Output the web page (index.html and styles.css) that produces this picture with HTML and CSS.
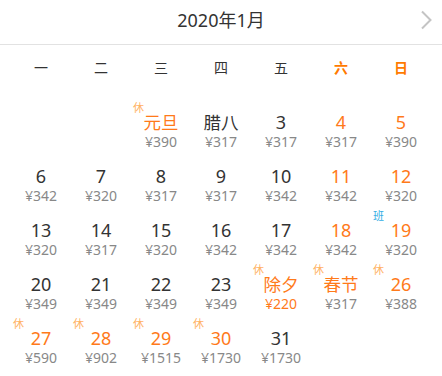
FILE: index.html
```html
<!DOCTYPE html>
<html lang="zh-CN">
<head>
<meta charset="utf-8">
<title>2020年1月</title>
<link rel="stylesheet" href="styles.css">
</head>
<body>
<div class="cal">
  <div class="cal-head">
    <span class="cal-title">2020年1月</span>
    <svg class="cal-next" width="13" height="20" viewBox="0 0 13 20"><path d="M2 1.5 L10.5 10 L2 18.5" fill="none" stroke="#c4c4c4" stroke-width="2"/></svg>
  </div>
  <div class="week">
    <span>一</span><span>二</span><span>三</span><span>四</span><span>五</span><span class="we">六</span><span class="we">日</span>
  </div>
  <div class="grid">
    <div class="cell"></div>
    <div class="cell"></div>
    <div class="cell"><i class="tag">休</i><span class="d hol">元旦</span><span class="p">¥390</span></div>
    <div class="cell"><span class="d cn">腊八</span><span class="p">¥317</span></div>
    <div class="cell"><span class="d">3</span><span class="p">¥317</span></div>
    <div class="cell"><span class="d we">4</span><span class="p">¥317</span></div>
    <div class="cell"><span class="d we">5</span><span class="p">¥390</span></div>

    <div class="cell"><span class="d">6</span><span class="p">¥342</span></div>
    <div class="cell"><span class="d">7</span><span class="p">¥320</span></div>
    <div class="cell"><span class="d">8</span><span class="p">¥317</span></div>
    <div class="cell"><span class="d">9</span><span class="p">¥317</span></div>
    <div class="cell"><span class="d">10</span><span class="p">¥342</span></div>
    <div class="cell"><span class="d we">11</span><span class="p">¥342</span></div>
    <div class="cell"><span class="d we">12</span><span class="p">¥320</span></div>

    <div class="cell"><span class="d">13</span><span class="p">¥320</span></div>
    <div class="cell"><span class="d">14</span><span class="p">¥317</span></div>
    <div class="cell"><span class="d">15</span><span class="p">¥320</span></div>
    <div class="cell"><span class="d">16</span><span class="p">¥342</span></div>
    <div class="cell"><span class="d">17</span><span class="p">¥342</span></div>
    <div class="cell"><span class="d we">18</span><span class="p">¥342</span></div>
    <div class="cell"><i class="tag work">班</i><span class="d we">19</span><span class="p">¥320</span></div>

    <div class="cell"><span class="d">20</span><span class="p">¥349</span></div>
    <div class="cell"><span class="d">21</span><span class="p">¥349</span></div>
    <div class="cell"><span class="d">22</span><span class="p">¥349</span></div>
    <div class="cell"><span class="d">23</span><span class="p">¥349</span></div>
    <div class="cell"><i class="tag">休</i><span class="d hol">除夕</span><span class="p low">¥220</span></div>
    <div class="cell"><i class="tag">休</i><span class="d hol">春节</span><span class="p">¥317</span></div>
    <div class="cell"><i class="tag">休</i><span class="d we">26</span><span class="p">¥388</span></div>

    <div class="cell"><i class="tag">休</i><span class="d we">27</span><span class="p">¥590</span></div>
    <div class="cell"><i class="tag">休</i><span class="d we">28</span><span class="p">¥902</span></div>
    <div class="cell"><i class="tag">休</i><span class="d we">29</span><span class="p">¥1515</span></div>
    <div class="cell"><i class="tag">休</i><span class="d we">30</span><span class="p">¥1730</span></div>
    <div class="cell"><span class="d">31</span><span class="p">¥1730</span></div>
    <div class="cell"></div>
    <div class="cell"></div>
  </div>
</div>
</body>
</html>
```
FILE: styles.css
```css
* { box-sizing: border-box; margin: 0; padding: 0; }
html, body { background: #fff; }
body {
  font-family: "Noto Sans", "Noto Sans CJK SC", sans-serif;
  color: #333;
  width: 442px;
  overflow: hidden;
}
.cal { width: 442px; }
.cal-head {
  position: relative;
  height: 45px;
  border-bottom: 1px solid #e2e2e2;
  display: flex;
  align-items: center;
  justify-content: center;
}
.cal-title {
  font-size: 18px;
  line-height: 24px;
  color: #333;
  margin-top: -4px;
}
.cal-next {
  position: absolute;
  right: 9px;
  top: 10px;
}
.week {
  display: grid;
  grid-template-columns: repeat(7, 60px);
  padding: 11px 11px 0;
  height: 58px;
}
.week span {
  text-align: center;
  font-size: 14px;
  line-height: 22px;
  color: #333;
  font-family: "Noto Sans CJK SC", sans-serif;
}
.week span.we { color: #ff7a00; font-weight: 700; }
.grid {
  display: grid;
  grid-template-columns: repeat(7, 60px);
  grid-auto-rows: 54px;
  padding: 0 11px;
}
.cell {
  position: relative;
  display: flex;
  flex-direction: column;
  align-items: center;
  padding-top: 8px;
}
.d {
  font-size: 18px;
  line-height: 22px;
  color: #333;
  font-family: "Noto Sans", "Noto Sans CJK SC", sans-serif;
}
.d.hol, .d.cn { font-family: "Noto Sans CJK SC", sans-serif; font-size: 17.5px; }
.d.we, .d.hol { color: #ff7a1a; }
.p {
  font-size: 14px;
  line-height: 18px;
  color: #888;
}
.p.low { color: #ff7a1a; }
.tag {
  position: absolute;
  left: 2px;
  top: -3px;
  font-style: normal;
  font-size: 11px;
  line-height: 14px;
  color: #ffb263;
  font-family: "Noto Sans CJK SC", sans-serif;
}
.tag.work { color: #33ade4; }
```
